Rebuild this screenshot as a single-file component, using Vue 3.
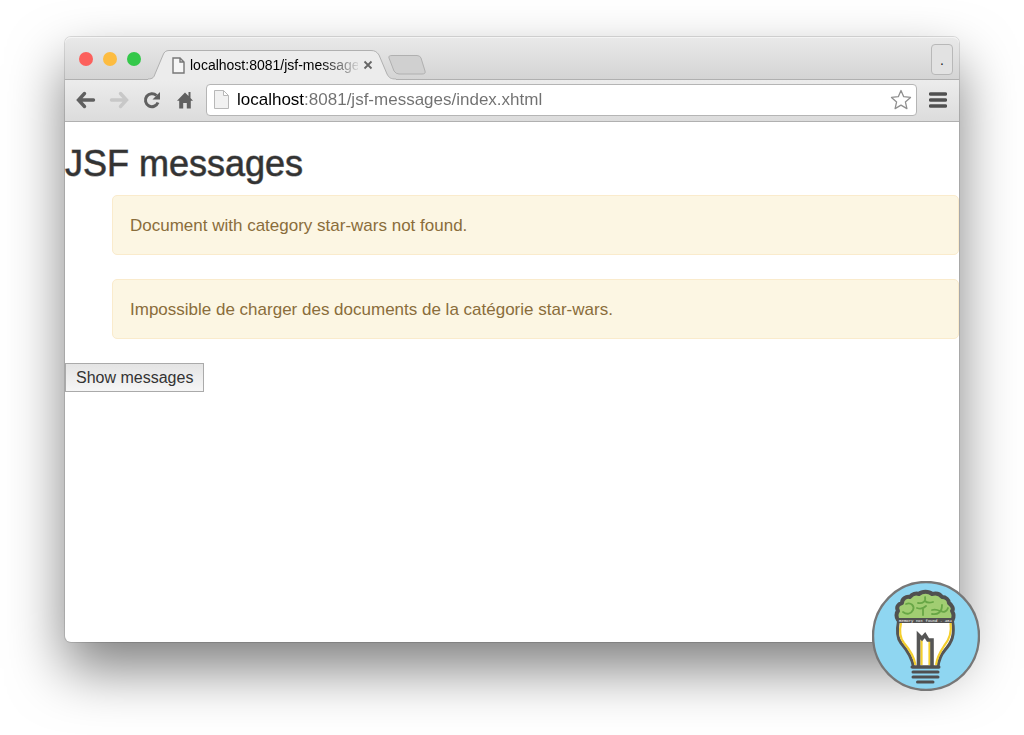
<template>
  <div class="page">
    <div class="window">
      <header class="tab-bar">
        <div class="lights">
          <button
            v-for="light in lights"
            :key="light"
            class="light"
            :class="light"
            :aria-label="light"
          ></button>
        </div>
        <div class="tab">
          <svg class="tab-shape" viewBox="0 0 248 30" aria-hidden="true">
            <path d="M0 30V29C5 29 6 27 7 24L15 5C16 2 18 .5 21 .5H223C227 .5 229 2 231 5L239 24C241 28 243 29 248 29V30Z" fill="#ececec" />
            <path d="M0 29C5 29 6 27 7 24L15 5C16 2 18 .5 21 .5H223C227 .5 229 2 231 5L239 24C241 28 243 29 248 29" fill="none" stroke="#b0b0b0" />
          </svg>
          <svg class="tab-icon" viewBox="0 0 13 17" aria-hidden="true">
            <path d="M1 1H8L12 5V16H1Z M8 1V5H12" fill="#f6f6f6" stroke="#777" stroke-width="1.4" />
          </svg>
          <span class="tab-title">{{ tabTitle }}</span>
          <button class="tab-close" aria-label="Close tab">
            <svg viewBox="0 0 10 10"><path d="M1.5 1.5L8.5 8.5M8.5 1.5L1.5 8.5" stroke="#666" stroke-width="1.8" /></svg>
          </button>
        </div>
        <button class="new-tab" aria-label="New tab">
          <svg viewBox="0 0 38 20">
            <path d="M4 .5H29Q32 .5 33 3L37 16Q38 19 34 19H11Q8 19 6 16L1 3Q0 .5 4 .5Z" fill="#d0d0d0" stroke="#b0b0b0" />
          </svg>
        </button>
        <button class="profile">.</button>
      </header>

      <nav class="toolbar">
        <div class="tools">
          <button class="tool" aria-label="Back">
            <svg viewBox="0 0 20 18"><path d="M8.5 2.5L2.5 9L8.5 15.5M3 9H17.500" fill="none" stroke="#606060" stroke-width="3.4" stroke-linecap="round" /></svg>
          </button>
          <button class="tool" aria-label="Forward">
            <svg viewBox="0 0 20 18"><path d="M11.5 2.5L17.5 9L11.5 15.5M17 9H2.5" fill="none" stroke="#c8c8c8" stroke-width="3.4" stroke-linecap="round" /></svg>
          </button>
          <button class="tool" aria-label="Reload">
            <svg viewBox="0 0 20 18">
              <path d="M16 11.5A6.500 6.500 0 1 1 14.500 4.500" fill="none" stroke="#606060" stroke-width="3" />
              <path d="M18 1V8.500H10.500Z" fill="#606060" />
            </svg>
          </button>
          <button class="tool" aria-label="Home">
            <svg viewBox="0 0 20 18"><path d="M10 1.500L13.500 5V1H15.500V7L18 9.800H15.800V17.500H11.800V12H8.200V17.500H4.200V9.800H2Z" fill="#606060" /></svg>
          </button>
        </div>
        <div class="address">
          <svg class="page-icon" viewBox="0 0 15 19" aria-hidden="true">
            <path d="M.5 .5H9.500L14.500 5.500V18.500H.5Z M9.500 .5V5.500H14.500" fill="#f1f1f1" stroke="#b8b8b8" />
          </svg>
          <input v-model="url" class="url" type="text" aria-label="Address" spellcheck="false" />
          <button class="star" aria-label="Bookmark">
            <svg viewBox="0 0 22 22">
              <path d="M11 1.500L13.700 7.700L20.500 8.400L15.400 12.900L16.900 19.600L11 16.100L5.100 19.600L6.600 12.900L1.500 8.400L8.300 7.700Z" fill="#fff" stroke="#909090" stroke-width="1.300" stroke-linejoin="round" />
            </svg>
          </button>
        </div>
        <button class="menu" aria-label="Menu">
          <svg viewBox="0 0 18 16"><path d="M1.500 2H16.500M1.500 8H16.500M1.500 14H16.500" stroke="#505050" stroke-width="3.400" stroke-linecap="round" /></svg>
        </button>
      </nav>

      <main class="content">
        <h1>JSF messages</h1>
        <ul class="messages">
          <li v-for="message in messages" :key="message" class="alert">{{ message }}</li>
        </ul>
        <button class="show">Show messages</button>
      </main>

      <svg class="badge" viewBox="0 0 108 110" role="img" aria-label="memory not found">
        <ellipse cx="54" cy="55" rx="53" ry="54" fill="#8fd6f1" stroke="#777" stroke-width="2.400" />
        <!-- bulb -->
        <path d="M26.500 40C24.500 50 25 57 29 62C35 69 40 76 41.500 86H66Q67 76 73 69C80 61 83 54 80.500 40Z" fill="#fff" stroke="#555" stroke-width="3" />
        <path d="M29 42C27 51 28 57 32 62C38 69 42 75 43.500 84M78.500 42C80 52 77 59 72 65C68 71 65 76 64 84" fill="none" stroke="#f4cf2e" stroke-width="2.200" />
        <path d="M49.500 57V84M57.500 59V84" stroke="#f4cf2e" stroke-width="2.200" />
        <path d="M46.500 85V54L50 57.500L53 54L56 59L60 59V85" fill="none" stroke="#555" stroke-width="3.600" />
        <!-- brain -->
        <path d="M26 39C24 36 24 32 26 30C24 26 26 23 30 22C30 18 34 15 38 16C40 13 44 12 47 13C50 10 57 10 60 13C64 12 68 13 70 16C74 16 77 19 77 22C80 24 82 28 80 30C82 33 82 36 80.500 39Z" fill="#a1cd72" stroke="#505050" stroke-width="4" stroke-linejoin="round" />
        <path d="M34 23C39 21 43 25 41 29M31 31C35 34 39 33 41 29M46 22C51 23 54 20 53 16M53 20C55 22 58 22 61 21M45 27C50 29 53 26 54 25M51 28V34M60 33C66 34 70 31 70 24M60 29C63 28 66 29 68 30M69 30C72 32 75 30 76 27" fill="none" stroke="#68a646" stroke-width="1.800" stroke-linecap="round" />
        <rect x="25" y="37" width="57" height="5" fill="#505050" />
        <text x="53.500" y="41" text-anchor="middle" class="badge-text">memory not found - 404</text>
        <!-- socket -->
        <path d="M40 86H67M41 91H66M41 96H66M45.500 101H61" stroke="#505050" stroke-width="3" stroke-linecap="round" />
      </svg>
    </div>
  </div>
</template>

<script setup>
import { ref } from 'vue';

const lights = ['close', 'minimize', 'zoom'];
const tabTitle = 'localhost:8081/jsf-message';
const url = ref('localhost:8081/jsf-messages/index.xhtml');
const messages = [
  'Document with category star-wars not found.',
  'Impossible de charger des documents de la catégorie star-wars.',
];
</script>

<style>
body {
  background: #fff;
}
</style>

<style scoped>
.page {
  box-sizing: border-box;
  display: flex;
  min-height: 100vh;
  padding: 37px 65px 93px;
  overflow: hidden;
  font-family: 'Liberation Sans', Arial, sans-serif;
}

.window {
  position: relative;
  display: flex;
  flex: 1;
  flex-direction: column;
  min-width: 0;
  border-radius: 6px;
  background: #fff;
  box-shadow: 0 0 0 1px rgba(0, 0, 0, 0.12), 0 27px 55px rgba(0, 0, 0, 0.5);
}

button {
  padding: 0;
  border: none;
  background: none;
  font-family: inherit;
}

svg {
  display: block;
}

/* tab bar */
.tab-bar {
  display: flex;
  height: 43px;
  border-radius: 6px 6px 0 0;
  background: linear-gradient(#e9e9e9, #d4d4d4);
  box-shadow: inset 0 1px #f4f4f4, inset 0 -1px #b0b0b0;
}

.lights {
  display: flex;
  gap: 10px;
  padding: 15px 0 0 14px;
}

.light {
  width: 14px;
  height: 14px;
  border-radius: 50%;
}

.close {
  background: #fc605c;
}

.minimize {
  background: #fdbc40;
}

.zoom {
  background: #34c84a;
}

.tab {
  position: relative;
  display: flex;
  align-items: center;
  align-self: flex-end;
  box-sizing: border-box;
  width: 248px;
  height: 30px;
  margin-left: 7px;
  padding-left: 24px;
}

.tab-shape {
  position: absolute;
  inset: 0;
  width: 248px;
  height: 30px;
}

.tab-icon {
  position: relative;
  width: 13px;
  height: 17px;
}

.tab-title {
  position: relative;
  width: 168px;
  margin-left: 5px;
  color: #000;
  font-size: 14px;
  line-height: 20px;
  white-space: nowrap;
  mask-image: linear-gradient(to right, #000 130px, transparent 172px);
}

.tab-close {
  position: relative;
  width: 10px;
  height: 10px;
  margin-left: 5px;
}

.new-tab {
  width: 38px;
  height: 20px;
  margin: 18px 0 0 -8px;
}

.profile {
  width: 22px;
  height: 31px;
  margin: 7px 6px 0 auto;
  border: 1px solid #b8b8b8;
  border-radius: 4px;
  background: #e2e2e2;
  color: #222;
  font-size: 14px;
}

/* toolbar */
.toolbar {
  display: flex;
  align-items: center;
  box-sizing: border-box;
  height: 42px;
  padding: 0 12px 2px 11px;
  border-bottom: 1px solid #b0b0b0;
  background: linear-gradient(#ececec, #dcdcdc);
}

.tools {
  display: flex;
  gap: 13px;
  margin-right: 11px;
}

.tool {
  width: 20px;
  height: 18px;
}

.address {
  display: flex;
  flex: 1;
  align-items: center;
  box-sizing: border-box;
  min-width: 0;
  height: 32px;
  padding: 0 4px 0 7px;
  border: 1px solid #b5b5b5;
  border-radius: 4px;
  background: #fff;
}

.page-icon {
  width: 15px;
  height: 19px;
}

.url {
  flex: 1;
  min-width: 0;
  height: 24px;
  margin-left: 8px;
  padding: 0;
  border: none;
  outline: none;
  background: linear-gradient(to right, #000 67px, #707070 67px);
  background-clip: text;
  font-family: inherit;
  font-size: 17px;
  -webkit-text-fill-color: transparent;
}

.star {
  width: 22px;
  height: 22px;
}

.menu {
  width: 18px;
  height: 16px;
  margin-left: 12px;
}

/* page */
.content {
  flex: 1;
  color: #333;
}

h1 {
  margin: 22px 0 11px;
  font-size: 36px;
  font-weight: 500;
  line-height: 40px;
  -webkit-text-stroke: 1px rgba(51, 51, 51, 0.6);
}

.messages {
  margin: 0;
  padding: 0 0 0 47px;
  list-style: none;
}

.alert {
  margin-bottom: 24px;
  padding: 18px 17px 16px;
  border: 1px solid #faebcc;
  border-radius: 5px;
  background: #fcf6e3;
  color: #8a6d3b;
  font-size: 17px;
  line-height: 24px;
}

.show {
  padding: 0 10px;
  border: 1px solid #aaa;
  background: linear-gradient(#e4e4e4, #f6f6f6);
  color: #333;
  font-size: 16px;
  line-height: 27px;
}

.badge {
  position: absolute;
  right: -21px;
  bottom: -49px;
  width: 108px;
  height: 110px;
}

.badge-text {
  fill: #fff;
  font-family: 'Liberation Mono', monospace;
  font-size: 4px;
}
</style>
